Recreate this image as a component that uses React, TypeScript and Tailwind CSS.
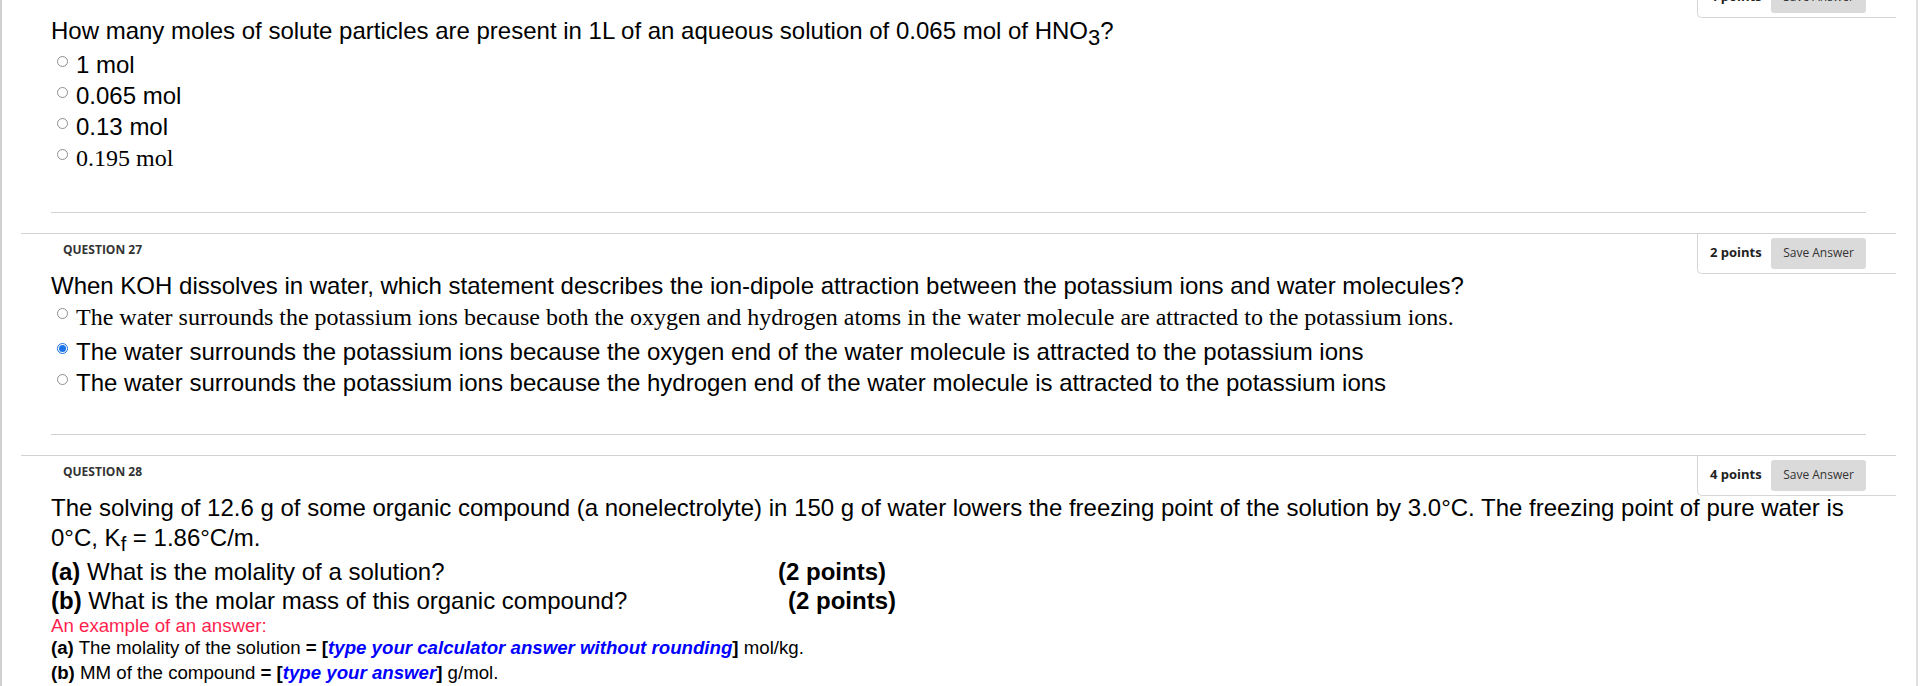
import React from "react";

const body = "font-['Liberation_Sans',Arial,sans-serif] text-black";
const serif = "font-['Liberation_Serif','Times_New_Roman',serif] text-black";
const ui = "font-['Open_Sans',sans-serif]";

function Radio({ checked }: { checked?: boolean }) {
  if (checked) {
    return (
      <span className="mb-[6px] ml-[6px] mr-[8px] flex h-[11px] w-[11px] shrink-0 items-center justify-center rounded-full border border-[#1a6ee0] bg-white">
        <span className="h-[7px] w-[7px] rounded-full bg-[#1a73e8]" />
      </span>
    );
  }
  return (
    <span className="mb-[6px] ml-[6px] mr-[8px] h-[11px] w-[11px] shrink-0 rounded-full border border-[#8f8f8f] bg-white" />
  );
}

function QuestionHeader({ label, points }: { label?: string; points: string }) {
  return (
    <div className="ml-[19px] mr-[20px] flex justify-between border-t border-[#d2d2d2]">
      <div className={`${ui} pl-[42px] pt-[8px] text-[12px] font-bold leading-[16px] text-[#333]`}>
        {label}
      </div>
      <div className="flex h-[40px] w-[199px] items-center rounded-bl-[5px] border-b border-l border-[#d6d6d6] pb-[1px] pl-[12px]">
        <span className={`${ui} text-[13px] font-bold text-[#222]`}>{points}</span>
        <button
          type="button"
          className={`${ui} ml-auto mr-[30px] h-[31px] w-[95px] rounded-[3px] bg-[#dadada] text-[12px] text-[#333]`}
        >
          Save Answer
        </button>
      </div>
    </div>
  );
}

function Separator() {
  return <div className="ml-[49px] mr-[50px] h-px bg-[#d2d2d2]" />;
}

function Option({
  children,
  checked,
  font,
  className,
}: {
  children: React.ReactNode;
  checked?: boolean;
  font?: string;
  className?: string;
}) {
  return (
    <div className={`flex h-[31px] items-center ${className ?? ""}`}>
      <Radio checked={checked} />
      <span className={font ?? `${body} text-[24px]`}>{children}</span>
    </div>
  );
}

export default function App() {
  return (
    <div className="flex h-[686px] w-[1924px] overflow-hidden bg-white">
      <div className="w-[2px] shrink-0 bg-[#d0d0d0]" />
      <div className="w-[1914px] shrink-0">
        {/* question 26, scrolled up */}
        <div className="-mt-[23px]">
          <QuestionHeader points="4 points" />
        </div>
        <div className="pl-[49px]">
          <div className={`${body} h-[26px] whitespace-nowrap text-[24px] leading-[26px]`}>
            How many moles of solute particles are present in 1L of an aqueous solution of 0.065 mol of HNO
            <span className="relative top-[6px] text-[22px]">3</span>?
          </div>
          <div className="mt-[5px]">
            <Option>1 mol</Option>
            <Option>0.065 mol</Option>
            <Option>0.13 mol</Option>
            <Option font={`${serif} text-[24px]`}>0.195 mol</Option>
          </div>
        </div>
        <div className="mt-[39px]">
          <Separator />
        </div>

        {/* question 27 */}
        <div className="mt-[20px]">
          <QuestionHeader label="QUESTION 27" points="2 points" />
        </div>
        <div className="pl-[49px]">
          <div className={`${body} h-[24px] whitespace-nowrap text-[24px] leading-[24px]`}>
            When KOH dissolves in water, which statement describes the ion-dipole attraction between the potassium ions and water molecules?
          </div>
          <Option className="mt-[3px] whitespace-nowrap" font={`${serif} text-[24px]`}>
            The water surrounds the potassium ions because both the oxygen and hydrogen atoms in the water molecule are attracted to the potassium ions.
          </Option>
          <Option checked className="mt-[4px] whitespace-nowrap">
            The water surrounds the potassium ions because the oxygen end of the water molecule is attracted to the potassium ions
          </Option>
          <Option className="whitespace-nowrap">
            The water surrounds the potassium ions because the hydrogen end of the water molecule is attracted to the potassium ions
          </Option>
        </div>
        <div className="mt-[36px]">
          <Separator />
        </div>

        {/* question 28 */}
        <div className="mt-[20px]">
          <QuestionHeader label="QUESTION 28" points="4 points" />
        </div>
        <div className="pl-[49px]">
          <div className={`${body} whitespace-nowrap text-[24px] leading-[24px]`}>
            The solving of 12.6 g of some organic compound (a nonelectrolyte) in 150 g of water lowers the freezing point of the solution by 3.0°C. The freezing point of pure water is
          </div>
          <div className={`${body} mt-[6px] whitespace-nowrap text-[24px] leading-[24px]`}>
            0°C, K<span className="relative top-[5px] text-[20px]">f</span> = 1.86°C/m.
          </div>
          <div className={`${body} mt-[6px] flex whitespace-nowrap text-[24px] leading-[29px]`}>
            <span className="w-[727px]">
              <b>(a)</b> What is the molality of a solution?
            </span>
            <b>(2 points)</b>
          </div>
          <div className={`${body} flex whitespace-nowrap text-[24px] leading-[29px]`}>
            <span className="w-[737px]">
              <b>(b)</b> What is the molar mass of this organic compound?
            </span>
            <b>(2 points)</b>
          </div>
          <div className="mt-[1px] font-['Liberation_Sans',Arial,sans-serif] text-[18.67px] leading-[20px] text-[#ff1f4f]">
            An example of an answer:
          </div>
          <div className={`${body} mt-[1px] whitespace-nowrap text-[18.67px] leading-[22px]`}>
            <b>(a)</b> The molality of the solution <b>= [</b>
            <b className="italic text-[#0000ff]">type your calculator answer without rounding</b>
            <b>]</b> mol/kg.
          </div>
          <div className={`${body} mt-[3px] whitespace-nowrap text-[18.67px] leading-[22px]`}>
            <b>(b)</b> MM of the compound <b>= [</b>
            <b className="italic text-[#0000ff]">type your answer</b>
            <b>]</b> g/mol.
          </div>
        </div>
      </div>
      <div className="w-[2px] shrink-0 bg-[#e0e0e0]" />
    </div>
  );
}
